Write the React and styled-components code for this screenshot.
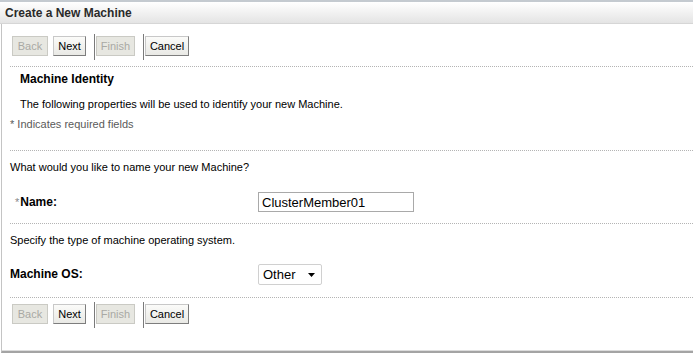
import React from 'react';
import styled, { createGlobalStyle } from 'styled-components';

const GlobalStyle = createGlobalStyle`
  html, body {
    margin: 0;
    padding: 0;
    background: #fff;
  }
  body {
    font-family: "Liberation Sans", Arial, sans-serif;
    font-size: 11px;
    color: #000;
  }
`;

const Page = styled.div`
  width: 693px;
  height: 354px;
  overflow: hidden;
`;

const Header = styled.div`
  height: 21px;
  border-top: 2px solid #c4cad0;
  border-bottom: 1px solid #d6d6d6;
  background: linear-gradient(#ffffff, #e4e4e4);
  display: flex;
  align-items: center;
  padding-left: 5px;
  font-size: 12px;
  font-weight: bold;
  color: #2a2a2a;
`;

const Body = styled.div`
  margin-left: 1px;
  height: 327px;
  border-left: 1px solid #c4c4c4;
  border-bottom: 2px solid #a4a4a4;
  box-shadow: inset 0 -1px 0 #dcdcdc;
  padding-left: 8px;
  display: flex;
  flex-direction: column;
`;

const Toolbar = styled.div`
  display: flex;
  align-items: flex-start;
  height: 20px;
  margin-left: 2px;
  margin-top: ${p => p.$top}px;
`;

const Button = styled.button`
  box-sizing: border-box;
  width: ${p => p.$w}px;
  height: 20px;
  margin: 0;
  margin-right: ${p => p.$gap || 0}px;
  padding: 0;
  font-family: "Liberation Sans", Arial, sans-serif;
  font-size: 11px;
  color: ${p => (p.disabled ? '#a9a9a4' : '#000')};
  background: ${p =>
    p.disabled ? '#e7e7e1' : 'linear-gradient(#fbfbf9, #e9e9e5)'};
  border: 1px solid;
  border-color: ${p =>
    p.disabled ? '#cacac4' : '#c8c8c8 #7d7d7d #7d7d7d #c8c8c8'};
  border-radius: 0;
`;

const Divider = styled.span`
  width: 1px;
  height: 26px;
  margin: -2px 1px -4px 0;
  background: #7a7a7a;
`;

const Rule = styled.div`
  border-top: 1px dotted #b4b4b4;
  margin-top: ${p => p.$top}px;
`;

const SectionTitle = styled.div`
  font-size: 12px;
  font-weight: bold;
  line-height: 14px;
  margin-top: 5px;
  padding-left: 10px;
`;

const Text = styled.div`
  line-height: 14px;
  margin-top: ${p => p.$top}px;
  padding-left: ${p => p.$indent || 0}px;
  color: ${p => p.$color || '#000'};
`;

const FieldRow = styled.div`
  display: flex;
  align-items: flex-start;
  margin-top: ${p => p.$top}px;
`;

const Label = styled.label`
  box-sizing: border-box;
  width: 248px;
  padding-top: 3px;
  font-size: 12px;
  font-weight: bold;
  line-height: 14px;
  padding-left: ${p => p.$indent || 0}px;
`;

const Required = styled.span`
  color: #888;
  font-weight: normal;
  font-size: 11px;
  margin-right: 1px;
`;

const Input = styled.input`
  box-sizing: border-box;
  width: 156px;
  height: 20px;
  margin: 0;
  padding: 0 3px;
  border: 1px solid #a9a9a9;
  font-family: "Liberation Sans", Arial, sans-serif;
  font-size: 13px;
  color: #000;
  outline: none;
`;

const Select = styled.div`
  box-sizing: border-box;
  width: 64px;
  height: 21px;
  border: 1px solid #d0d0d0;
  border-radius: 2px;
  display: flex;
  align-items: center;
  justify-content: space-between;
  padding: 0 6px 0 4px;
  font-size: 13px;
`;

const Caret = styled.svg`
  width: 7px;
  height: 4px;
`;

function Buttons({ top }) {
  return (
    <Toolbar $top={top}>
      <Button disabled $w={36} $gap={5}>Back</Button>
      <Button $w={33} $gap={8}>Next</Button>
      <Divider />
      <Button disabled $w={39} $gap={8}>Finish</Button>
      <Divider />
      <Button $w={44}>Cancel</Button>
    </Toolbar>
  );
}

export default function App() {
  return (
    <Page>
      <GlobalStyle />
      <Header>Create a New Machine</Header>
      <Body>
        <Buttons top={12} />
        <Rule $top={10} />
        <SectionTitle>Machine Identity</SectionTitle>
        <Text $top={11} $indent={10}>
          The following properties will be used to identify your new Machine.
        </Text>
        <Text $top={6} $color="#5a5a5a">* Indicates required fields</Text>
        <Rule $top={19} />
        <Text $top={9}>What would you like to name your new Machine?</Text>
        <FieldRow $top={18}>
          <Label $indent={5}>
            <Required>*</Required>Name:
          </Label>
          <Input defaultValue="ClusterMember01" />
        </FieldRow>
        <Rule $top={11} />
        <Text $top={9}>Specify the type of machine operating system.</Text>
        <FieldRow $top={17}>
          <Label>Machine OS:</Label>
          <Select>
            Other
            <Caret viewBox="0 0 7 4">
              <path d="M0 0H7L3.5 4Z" fill="#000" />
            </Caret>
          </Select>
        </FieldRow>
        <Rule $top={12} />
        <Buttons top={6} />
      </Body>
    </Page>
  );
}
